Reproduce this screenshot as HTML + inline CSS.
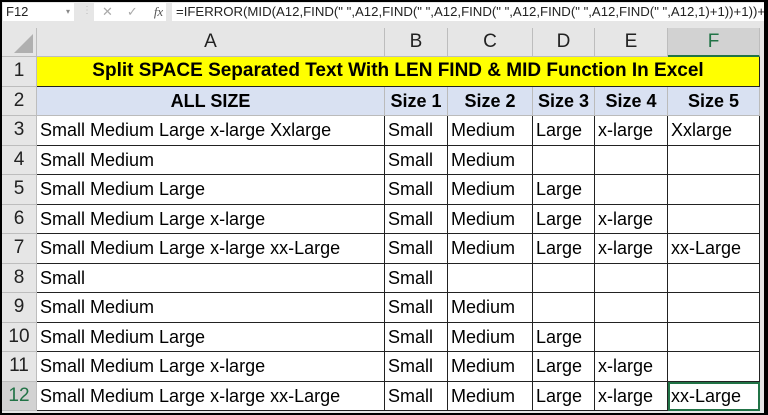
<!DOCTYPE html><html><head><style>
body{margin:0;width:768px;height:415px;overflow:hidden;background:#000;font-family:"Liberation Sans",sans-serif;position:relative}
#frame{position:absolute;left:2px;top:2px;width:762px;height:411px;background:#e6e6e6;overflow:hidden}
.box{position:absolute;background:#fff;top:1px;height:18px;font-size:12px;line-height:18px;color:#222}
.grid{position:absolute;left:0;top:26px;display:grid;grid-template-columns:35px 348px 63px 85px 62px 73px 92px;grid-template-rows:29px repeat(12,29.5px)}
.grid div{border-right:1px solid #c8c8c8;border-bottom:1px solid #c8c8c8;font-size:18px;line-height:28px;white-space:nowrap;overflow:hidden;color:#000;padding-left:3px}
.grid .ch{background:#e6e6e6;text-align:center;padding:0;color:#222;border-color:#bdbdbd;font-size:19px}
.grid .rh{background:#e6e6e6;text-align:center;padding:0;color:#222;border-color:#bdbdbd;font-size:19px}
.grid .c{background:#fff;border-color:#222}
.t{grid-column:2/8;background:#ffff00!important;font-weight:bold;text-align:center;padding:0!important;border-color:#222!important;font-size:19px!important}
.h{background:#d9e1f2!important;font-weight:bold;text-align:center;padding:0!important;border-color:#bbb!important}
</style></head><body><div id="frame">
<div class="box" style="left:1px;width:68px;padding-left:3px;font-size:13px">F12<span style="position:absolute;right:4px;font-size:8px;color:#888">▾</span></div>
<div style="position:absolute;left:80px;top:3px;color:#bbb;font-size:10px">⋮</div>
<div class="box" style="left:92px;width:72px;color:#aaa;font-size:13px"><span style="margin-left:8px">✕</span><span style="margin-left:14px">✓</span><span style="margin-left:16px;font-style:italic;font-family:'Liberation Serif',serif;color:#555">fx</span></div>
<div class="box" style="left:170px;width:600px;padding-left:4px;font-size:13.2px;white-space:nowrap;overflow:hidden">=IFERROR(MID(A12,FIND(" ",A12,FIND(" ",A12,FIND(" ",A12,FIND(" ",A12,FIND(" ",A12,1)+1))+1))+1</div>
<div class="grid">
<div class="ch"><svg width="30" height="26"><polygon points="10,25 29,25 29,6" fill="#b0b0b0"/></svg></div><div class="ch">A</div><div class="ch">B</div><div class="ch">C</div><div class="ch">D</div><div class="ch">E</div><div class="ch" style="color:#217346;border-bottom:2px solid #217346;background:#d2d2d2">F</div>
<div class="rh">1</div><div class="t">Split SPACE Separated Text With LEN FIND &amp; MID Function In Excel</div>
<div class="rh">2</div><div class="h">ALL SIZE</div><div class="h">Size 1</div><div class="h">Size 2</div><div class="h">Size 3</div><div class="h">Size 4</div><div class="h">Size 5</div>
<div class="rh">3</div><div class="c">Small Medium Large x-large Xxlarge</div><div class="c">Small</div><div class="c">Medium</div><div class="c">Large</div><div class="c">x-large</div><div class="c">Xxlarge</div>
<div class="rh">4</div><div class="c">Small Medium</div><div class="c">Small</div><div class="c">Medium</div><div class="c"></div><div class="c"></div><div class="c"></div>
<div class="rh">5</div><div class="c">Small Medium Large</div><div class="c">Small</div><div class="c">Medium</div><div class="c">Large</div><div class="c"></div><div class="c"></div>
<div class="rh">6</div><div class="c">Small Medium Large x-large</div><div class="c">Small</div><div class="c">Medium</div><div class="c">Large</div><div class="c">x-large</div><div class="c"></div>
<div class="rh">7</div><div class="c">Small Medium Large x-large xx-Large</div><div class="c">Small</div><div class="c">Medium</div><div class="c">Large</div><div class="c">x-large</div><div class="c">xx-Large</div>
<div class="rh">8</div><div class="c">Small</div><div class="c">Small</div><div class="c"></div><div class="c"></div><div class="c"></div><div class="c"></div>
<div class="rh">9</div><div class="c">Small Medium</div><div class="c">Small</div><div class="c">Medium</div><div class="c"></div><div class="c"></div><div class="c"></div>
<div class="rh">10</div><div class="c">Small Medium Large</div><div class="c">Small</div><div class="c">Medium</div><div class="c">Large</div><div class="c"></div><div class="c"></div>
<div class="rh">11</div><div class="c">Small Medium Large x-large</div><div class="c">Small</div><div class="c">Medium</div><div class="c">Large</div><div class="c">x-large</div><div class="c"></div>
<div class="rh" style="color:#217346;background:#d2d2d2">12</div><div class="c">Small Medium Large x-large xx-Large</div><div class="c">Small</div><div class="c">Medium</div><div class="c">Large</div><div class="c">x-large</div><div class="c" style="outline:2px solid #217346;outline-offset:-2px">xx-Large</div>
</div></div></body></html>
